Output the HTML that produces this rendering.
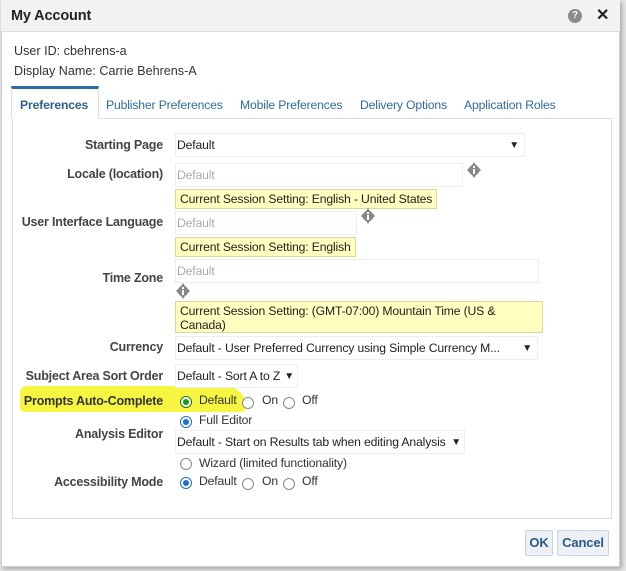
<!DOCTYPE html>
<html><head><style>
*{margin:0;padding:0;box-sizing:border-box}
body{width:626px;height:571px;background:#e4e4e4;font-family:"Liberation Sans",sans-serif;font-size:12.2px;letter-spacing:-0.15px;color:#333;position:relative;overflow:hidden}
.a{position:absolute;white-space:nowrap}
#dlg{position:absolute;left:1px;top:0;width:619px;height:567px;background:#fff;border:1px solid #cfcfcf;box-shadow:2px 2px 4px rgba(0,0,0,.25)}
#title{position:absolute;left:1px;top:0;width:619px;height:32px;background:#f2f2f2;border-bottom:1px solid #ddd}
.lbl{position:absolute;right:463px;text-align:right;white-space:nowrap;font-weight:bold;color:#444;font-size:12.5px;letter-spacing:-0.2px}
.box{position:absolute;border:1px solid #eee;background:#fff;height:24px;padding:4px 1px;color:#222;white-space:nowrap;overflow:hidden}
.ph{color:#aaa}
.yel{position:absolute;background:#ffffc0;border:1px solid #d8d8a0;padding:2px 4px;color:#222;line-height:14px;white-space:nowrap}
.arr{position:absolute;right:5px;top:6px;font-size:10px;background:#fff}
.info{position:absolute;width:14px;height:16px}
.r{position:absolute;width:12px;height:12px;border:1px solid #888;border-radius:50%;background:#fff}
.r.on{border-color:#1a6fd0}
.r.on::after{content:"";position:absolute;left:2px;top:2px;width:6px;height:6px;border-radius:50%;background:#1a6fd0}
.r.g{border-color:#1a7a1a}.r.g::after{background:#1a9a1a}
.btn{position:absolute;top:530px;height:26px;border:1px solid #c8d4de;background:#edf1f5;border-radius:2px;color:#2a5a85;font-weight:bold;font-size:13px;text-align:center;line-height:24px}
</style></head><body>
<div id="dlg"></div>
<div id="title"></div>
<div class="a" style="left:11px;top:8px;font-size:14.5px;font-weight:bold;color:#222">My Account</div>
<div class="a" style="left:568px;top:9px;width:14px;height:14px;border-radius:50%;background:#8a8a8a;color:#fff;font-size:10px;font-weight:bold;text-align:center;line-height:14px">?</div>
<div class="a" style="left:596px;top:5px;font-size:16px;font-weight:bold;color:#222">✕</div>
<div class="a" style="left:14px;top:44px;font-size:12.6px;letter-spacing:0">User ID: cbehrens-a</div>
<div class="a" style="left:14px;top:64px;font-size:12.6px;letter-spacing:0">Display Name: Carrie Behrens-A</div>
<div class="a" style="left:12px;top:118px;width:600px;height:401px;border:1px solid #ddd"></div>
<div class="a" style="left:11px;top:86px;width:88px;height:33px;border:1px solid #ddd;border-top:3px solid #2d6ca2;border-bottom:1px solid #fff;background:#fff"></div>
<div class="a" style="left:20px;top:98px;font-weight:bold;color:#2d5f8c">Preferences</div>
<div class="a" style="left:106px;top:98px;color:#2d6ca2">Publisher Preferences</div>
<div class="a" style="left:240px;top:98px;color:#2d6ca2">Mobile Preferences</div>
<div class="a" style="left:360px;top:98px;color:#2d6ca2">Delivery Options</div>
<div class="a" style="left:464px;top:98px;color:#2d6ca2">Application Roles</div>
<div class="a" style="left:20px;top:386px;width:226px;height:26px;background:#f6f640;border-radius:12px 40px 10px 8px"></div>
<div class="lbl" style="top:138px">Starting Page</div>
<div class="lbl" style="top:167px">Locale (location)</div>
<div class="lbl" style="top:215px">User Interface Language</div>
<div class="lbl" style="top:271px">Time Zone</div>
<div class="lbl" style="top:340px">Currency</div>
<div class="lbl" style="top:369px">Subject Area Sort Order</div>
<div class="lbl" style="top:394px;color:#333">Prompts Auto-Complete</div>
<div class="lbl" style="top:427px">Analysis Editor</div>
<div class="lbl" style="top:475px">Accessibility Mode</div>
<div class="box" style="left:175px;top:133px;width:350px">Default<span class="arr">▼</span></div>
<div class="box ph" style="left:175px;top:163px;width:288px">Default</div>
<svg class="info" style="left:467px;top:162px" viewBox="0 0 14 16"><path d="M7 0L9 3A6 6 0 0 1 12 6L14 8L12 10A6 6 0 0 1 9 13L7 16L5 13A6 6 0 0 1 2 10L0 8L2 6A6 6 0 0 1 5 3Z" fill="#888"/><rect x="6" y="4" width="2" height="2" fill="#fff"/><rect x="6" y="7" width="2" height="5" fill="#fff"/></svg>
<div class="yel" style="left:175px;top:189px">Current Session Setting: English - United States</div>
<div class="box ph" style="left:175px;top:211px;width:182px">Default</div>
<svg class="info" style="left:361px;top:208px" viewBox="0 0 14 16"><path d="M7 0L9 3A6 6 0 0 1 12 6L14 8L12 10A6 6 0 0 1 9 13L7 16L5 13A6 6 0 0 1 2 10L0 8L2 6A6 6 0 0 1 5 3Z" fill="#888"/><rect x="6" y="4" width="2" height="2" fill="#fff"/><rect x="6" y="7" width="2" height="5" fill="#fff"/></svg>
<div class="yel" style="left:175px;top:237px">Current Session Setting: English</div>
<div class="box ph" style="left:175px;top:259px;width:364px">Default</div>
<svg class="info" style="left:176px;top:283px" viewBox="0 0 14 16"><path d="M7 0L9 3A6 6 0 0 1 12 6L14 8L12 10A6 6 0 0 1 9 13L7 16L5 13A6 6 0 0 1 2 10L0 8L2 6A6 6 0 0 1 5 3Z" fill="#888"/><rect x="6" y="4" width="2" height="2" fill="#fff"/><rect x="6" y="7" width="2" height="5" fill="#fff"/></svg>
<div class="yel" style="left:175px;top:301px;width:368px;height:32px">Current Session Setting: (GMT-07:00) Mountain Time (US &amp;<br>Canada)</div>
<div class="box" style="left:175px;top:336px;width:363px">Default - User Preferred Currency using Simple Currency M...<span class="arr">▼</span></div>
<div class="box" style="left:175px;top:364px;width:123px">Default - Sort A to Z <span class="arr" style="right:3px">▼</span></div>
<div class="r on g" style="left:180px;top:396px"></div><div class="a" style="left:199px;top:393px">Default</div>
<div class="r" style="left:242px;top:397px"></div><div class="a" style="left:262px;top:393px">On</div>
<div class="r" style="left:283px;top:397px"></div><div class="a" style="left:302px;top:393px">Off</div>
<div class="r on" style="left:180px;top:416px"></div><div class="a" style="left:199px;top:413px">Full Editor</div>
<div class="box" style="left:175px;top:430px;width:290px">Default - Start on Results tab when editing Analysis<span class="arr" style="right:3px">▼</span></div>
<div class="r" style="left:180px;top:458px"></div><div class="a" style="left:199px;top:456px">Wizard (limited functionality)</div>
<div class="r on" style="left:180px;top:477px"></div><div class="a" style="left:199px;top:474px">Default</div>
<div class="r" style="left:242px;top:478px"></div><div class="a" style="left:262px;top:474px">On</div>
<div class="r" style="left:283px;top:478px"></div><div class="a" style="left:302px;top:474px">Off</div>
<div class="btn" style="left:525px;width:28px">OK</div>
<div class="btn" style="left:557px;width:52px">Cancel</div>
</body></html>
